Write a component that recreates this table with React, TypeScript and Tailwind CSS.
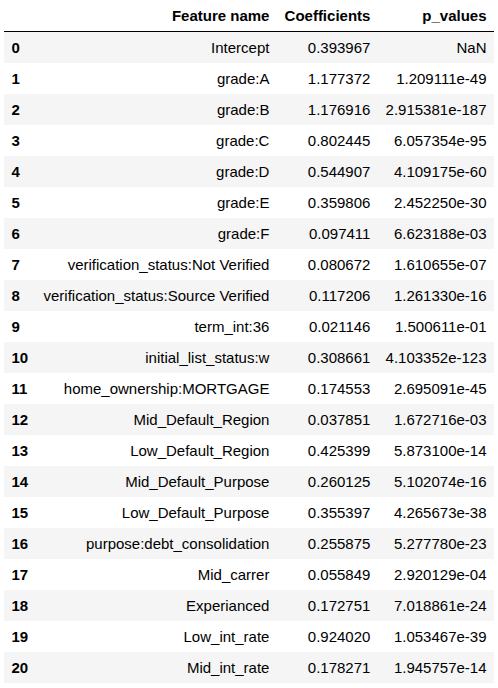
const rows: [string, string, string][] = [
  ["Intercept", "0.393967", "NaN"],
  ["grade:A", "1.177372", "1.209111e-49"],
  ["grade:B", "1.176916", "2.915381e-187"],
  ["grade:C", "0.802445", "6.057354e-95"],
  ["grade:D", "0.544907", "4.109175e-60"],
  ["grade:E", "0.359806", "2.452250e-30"],
  ["grade:F", "0.097411", "6.623188e-03"],
  ["verification_status:Not Verified", "0.080672", "1.610655e-07"],
  ["verification_status:Source Verified", "0.117206", "1.261330e-16"],
  ["term_int:36", "0.021146", "1.500611e-01"],
  ["initial_list_status:w", "0.308661", "4.103352e-123"],
  ["home_ownership:MORTGAGE", "0.174553", "2.695091e-45"],
  ["Mid_Default_Region", "0.037851", "1.672716e-03"],
  ["Low_Default_Region", "0.425399", "5.873100e-14"],
  ["Mid_Default_Purpose", "0.260125", "5.102074e-16"],
  ["Low_Default_Purpose", "0.355397", "4.265673e-38"],
  ["purpose:debt_consolidation", "0.255875", "5.277780e-23"],
  ["Mid_carrer", "0.055849", "2.920129e-04"],
  ["Experianced", "0.172751", "7.018861e-24"],
  ["Low_int_rate", "0.924020", "1.053467e-39"],
  ["Mid_int_rate", "0.178271", "1.945757e-14"],
];

export default function App() {
  return (
    <div className="bg-white w-[498px] h-[688px] px-1 font-['Liberation_Sans',Arial,sans-serif] text-[15px] leading-[17px] text-black whitespace-nowrap">
      <table className="border-collapse w-[490px]">
        <thead>
          <tr className="border-b border-black">
            <th className="px-[7.5px] py-[7px] text-right font-bold"></th>
            <th className="px-[7.5px] py-[7px] text-right font-bold">Feature name</th>
            <th className="px-[7.5px] py-[7px] text-right font-bold">Coefficients</th>
            <th className="px-[7.5px] py-[7px] text-right font-bold">p_values</th>
          </tr>
        </thead>
        <tbody>
          {rows.map((r, i) => (
            <tr key={i} className={i % 2 === 0 ? "bg-[#f5f5f5]" : "bg-white"}>
              <th className="px-[7.5px] py-[7px] text-left font-bold">{i}</th>
              <td className="px-[7.5px] py-[7px] text-right">{r[0]}</td>
              <td className="px-[7.5px] py-[7px] text-right">{r[1]}</td>
              <td className="px-[7.5px] py-[7px] text-right">{r[2]}</td>
            </tr>
          ))}
        </tbody>
      </table>
    </div>
  );
}
